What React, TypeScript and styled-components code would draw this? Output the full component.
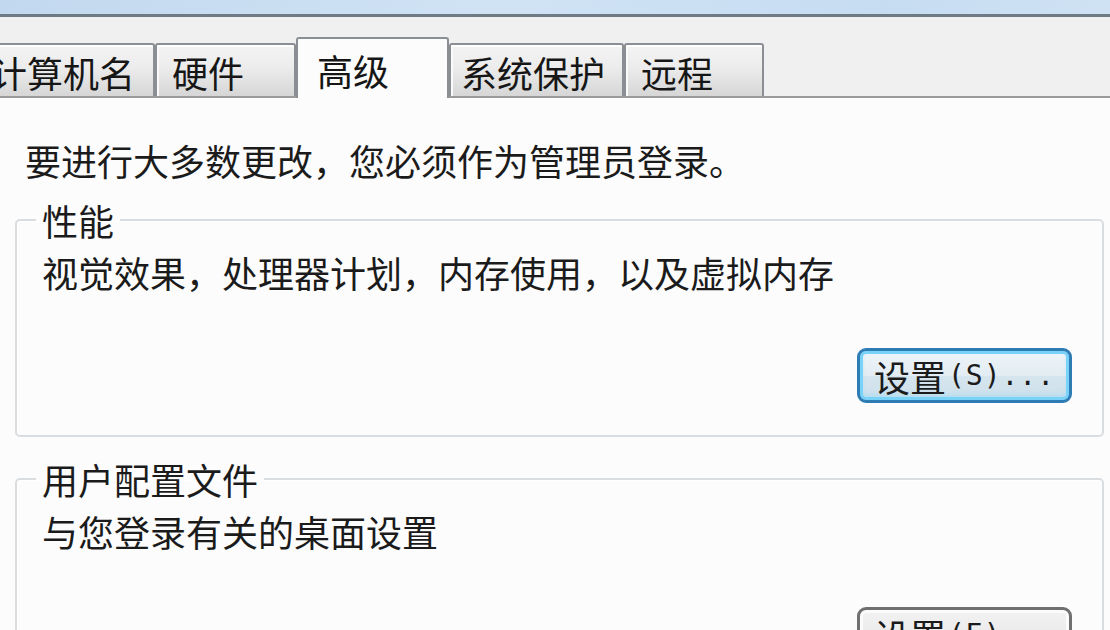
import React from "react";
import styled, { createGlobalStyle } from "styled-components";

const GlobalStyle = createGlobalStyle`
  html, body {
    margin: 0;
    padding: 0;
  }
  body {
    width: 1110px;
    height: 630px;
    overflow: hidden;
    background: #fcfcfc;
    font-family: "Noto Sans CJK SC", "Noto Sans", sans-serif;
    color: #1b1b1b;
  }
`;

type TabInfo = { label: string; width: number; pad: number; active?: boolean };

const tabs: TabInfo[] = [
  { label: "计算机名", width: 178, pad: 12 },
  { label: "硬件", width: 141, pad: 15 },
  { label: "高级", width: 153, pad: 19, active: true },
  { label: "系统保护", width: 175, pad: 10 },
  { label: "远程", width: 140, pad: 15 },
];

function App() {
  return (
    <Window>
      <GlobalStyle />
      <TitleBar />
      <TabStrip>
        {tabs.map((t) => (
          <Tab key={t.label} $width={t.width} $pad={t.pad} $active={t.active}>
            {t.label}
          </Tab>
        ))}
      </TabStrip>
      <Panel>
        <Intro>要进行大多数更改，您必须作为管理员登录。</Intro>
        <GroupBox>
          <Legend>性能</Legend>
          <Description>视觉效果，处理器计划，内存使用，以及虚拟内存</Description>
          <ButtonRow>
            <Button $primary>
              设置<Mnemonic>(S)...</Mnemonic>
            </Button>
          </ButtonRow>
        </GroupBox>
        <GroupBox>
          <Legend>用户配置文件</Legend>
          <Description>与您登录有关的桌面设置</Description>
          <ButtonRow>
            <Button>
              设置<Mnemonic>(E)...</Mnemonic>
            </Button>
          </ButtonRow>
        </GroupBox>
      </Panel>
    </Window>
  );
}

export default App;

const Window = styled.div`
  width: 1110px;
  height: 630px;
  overflow: hidden;
  display: flex;
  flex-direction: column;
  background: #fcfcfc;
`;

const TitleBar = styled.div`
  flex: none;
  height: 14px;
  background: linear-gradient(to right, #c2d8ee, #d0e3f5 45%, #c6dcf1 80%, #cfe2f4);
  border-bottom: 3px solid #6e7a84;
`;

const TabStrip = styled.div`
  flex: none;
  display: flex;
  align-items: flex-end;
  height: 79px;
  margin-left: -23px;
  background: #f0f0f0;
  border-bottom: 2px solid #9a9a9a;
`;

const Tab = styled.div<{ $width: number; $pad: number; $active?: boolean }>`
  box-sizing: border-box;
  flex: none;
  width: ${(p) => p.$width}px;
  height: ${(p) => (p.$active ? 61 : 53)}px;
  margin-bottom: ${(p) => (p.$active ? -2 : 0)}px;
  padding-left: ${(p) => p.$pad}px;
  padding-top: ${(p) => (p.$active ? 13 : 9)}px;
  border: 2px solid #8b8e93;
  border-bottom: none;
  border-radius: 3px 3px 0 0;
  position: relative;
  z-index: ${(p) => (p.$active ? 1 : 0)};
  background: ${(p) =>
    p.$active ? "#fcfcfc" : "linear-gradient(#f4f4f4, #ececec 45%, #dedede 80%, #d6d6d6)"};
  box-shadow: ${(p) => (p.$active ? "none" : "inset 0 2px 0 #ffffff, inset 2px 0 0 #fafafa")};
  font-size: 36px;
  line-height: 36px;
  white-space: nowrap;
  color: #161616;
`;

const Panel = styled.div`
  flex: 1;
  padding: 44px 6px 0 15px;
  background: #fcfcfc;
`;

const Intro = styled.p`
  margin: 0 0 0 10px;
  font-size: 36px;
  line-height: 36px;
  white-space: nowrap;
`;

const GroupBox = styled.fieldset`
  margin: 24px 0 0 0;
  padding: 16px 30px 32px 25px;
  border: 2px solid #d9dde0;
  border-radius: 5px;
  box-shadow: inset 1px 1px 0 #ffffff;
  min-width: 0;
`;

const Legend = styled.legend`
  padding: 0 6px;
  margin-left: -6px;
  font-size: 36px;
  line-height: 36px;
`;

const Description = styled.div`
  font-size: 36px;
  line-height: 36px;
  white-space: nowrap;
`;

const ButtonRow = styled.div`
  display: flex;
  justify-content: flex-end;
  margin-top: 58px;
`;

const Button = styled.button<{ $primary?: boolean }>`
  box-sizing: border-box;
  width: 215px;
  height: 55px;
  padding: 0;
  display: flex;
  align-items: center;
  justify-content: center;
  font-family: inherit;
  font-size: 36px;
  line-height: 36px;
  color: #1b1b1b;
  border-radius: 9px;
  border: 3px solid ${(p) => (p.$primary ? "#2d7cb4" : "#707070")};
  background: ${(p) =>
    p.$primary
      ? "linear-gradient(#eef5f9, #e2ecf2 50%, #d6e5ee 50%, #cde0eb)"
      : "linear-gradient(#f2f2f2, #ebebeb 50%, #dddddd 50%, #cfcfcf)"};
  box-shadow: ${(p) =>
    p.$primary
      ? "inset 0 0 0 3px #79d2f7, inset 0 -4px 6px #a8dbf2"
      : "inset 0 0 0 3px #fbfbfb"};
`;

const Mnemonic = styled.span`
  font-family: "DejaVu Sans Mono", "Liberation Mono", monospace;
  font-size: 28px;
  letter-spacing: 1px;
  margin-left: 2px;
`;
